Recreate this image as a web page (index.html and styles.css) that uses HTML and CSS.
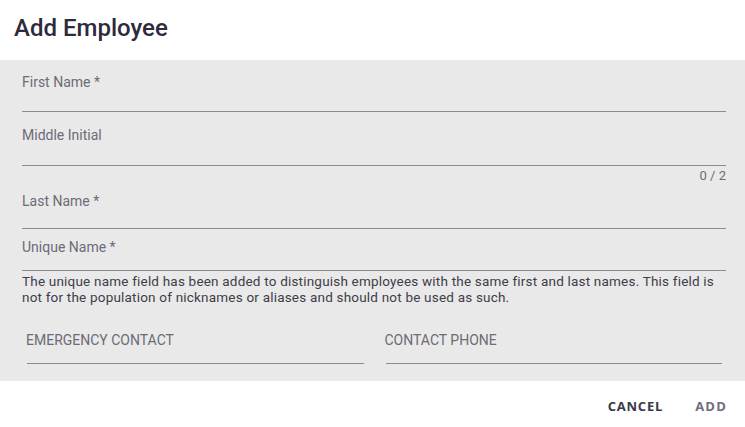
FILE: index.html
```html
<!DOCTYPE html>
<html lang="en">
<head>
<meta charset="utf-8">
<title>Add Employee</title>
<link rel="stylesheet" href="styles.css">
</head>
<body>
<div class="dialog">
  <h2 class="dialog-title">Add Employee</h2>
  <div class="dialog-content">
    <div class="field f1">
      <div class="label">First Name *</div>
      <div class="line l1"></div>
    </div>
    <div class="field f2">
      <div class="label">Middle Initial</div>
      <div class="line l2"></div>
      <div class="counter">0 / 2</div>
    </div>
    <div class="field f3">
      <div class="label">Last Name *</div>
      <div class="line l3"></div>
    </div>
    <div class="field f4">
      <div class="label">Unique Name *</div>
      <div class="line l4"></div>
    </div>
    <p class="help">The unique name field has been added to distinguish employees with the same first and last names. This field is not for the population of nicknames or aliases and should not be used as such.</p>
    <div class="contact-row">
      <div class="field">
        <div class="label">EMERGENCY CONTACT</div>
        <div class="line l5"></div>
      </div>
      <div class="field">
        <div class="label">CONTACT PHONE</div>
        <div class="line l5"></div>
      </div>
    </div>
  </div>
  <div class="dialog-actions">
    <button class="btn btn-cancel">CANCEL</button>
    <button class="btn btn-add">ADD</button>
  </div>
</div>
</body>
</html>
```
FILE: styles.css
```css
html, body {
  margin: 0;
  padding: 0;
  background: #ffffff;
}
body {
  font-family: Roboto, "Liberation Sans", sans-serif;
  width: 745px;
  height: 427px;
  overflow: hidden;
}
.dialog {
  display: flex;
  flex-direction: column;
}
.dialog-title {
  margin: 0;
  height: 60px;
  box-sizing: border-box;
  padding: 14px 0 0 14px;
  font-size: 24px;
  line-height: 28px;
  font-weight: 500;
  color: #2d2b3b;
}
.dialog-content {
  background: #e9e9e9;
  padding: 0 19px 17px 22px;
}
.label {
  font-size: 14px;
  line-height: 16px;
  color: #6c6b77;
}
.line {
  border-bottom: 1px solid #8c8b95;
}
.f1 { padding-top: 14px; }
.l1 { height: 21px; }
.f2 { margin-top: 15px; }
.l2 { height: 22px; }
.counter {
  margin-top: 3px;
  text-align: right;
  font-size: 13px;
  line-height: 14px;
  color: #6c6b77;
}
.f3 { margin-top: 10px; }
.l3 { height: 19px; }
.f4 { margin-top: 10px; }
.l4 { height: 15px; }
.help {
  margin: 2px 0 0;
  max-width: 700px;
  font-size: 13.5px;
  letter-spacing: 0.2px;
  line-height: 16px;
  color: #3e3d4a;
}
.contact-row {
  margin-top: 27px;
  display: grid;
  grid-template-columns: 1fr 1fr;
  column-gap: 22px;
  padding: 0 4px 0 5px;
}
.contact-row .label {
  margin-left: -1px;
}
.l5 { height: 15px; }
.dialog-actions {
  display: flex;
  justify-content: flex-end;
  height: 46px;
  box-sizing: border-box;
  align-items: center;
  padding: 4px 2px 0 0;
}
.btn {
  background: none;
  border: none;
  font-family: "Open Sans", "Liberation Sans", sans-serif;
  font-weight: 700;
  font-size: 13px;
  letter-spacing: 0.8px;
  padding: 0 16px;
  line-height: 20px;
}
.btn-cancel { color: #3a3947; }
.btn-add { color: #6f6e7c; letter-spacing: 1.2px; }
```
